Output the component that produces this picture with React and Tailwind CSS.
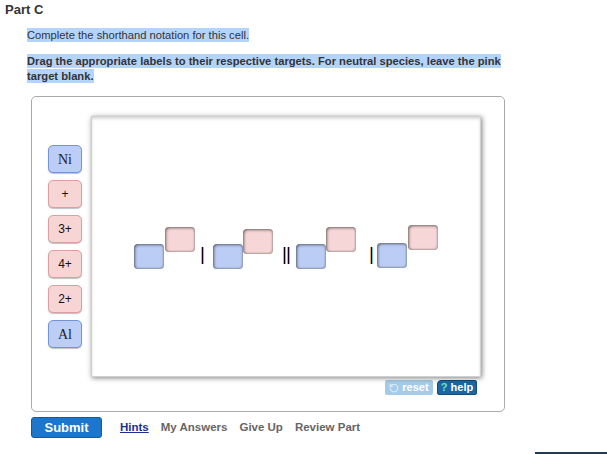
import { RotateCcw } from 'lucide-react';

const labels = [
    { text: 'Ni', kind: 'blue' },
    { text: '+', kind: 'pink' },
    { text: '3+', kind: 'pink' },
    { text: '4+', kind: 'pink' },
    { text: '2+', kind: 'pink' },
    { text: 'Al', kind: 'blue' },
];

// target pairs on the canvas: blue (species) + pink (charge), positions relative to canvas
const pairs = [
    { bx: 42, by: 127, px: 73, py: 110 },
    { bx: 121, by: 127, px: 151, py: 112 },
    { bx: 204, by: 127, px: 234, py: 110 },
    { bx: 285, by: 126, px: 316, py: 108 },
];

const seps = [
    { x: 108, text: '|' },
    { x: 190, text: '||' },
    { x: 277, text: '|' },
];

function Label({ text, kind }) {
    const isBlue = kind === 'blue';
    return (
        <div
            className={`w-[34px] h-[28px] rounded-[5px] border-[1.5px] flex items-center justify-center shadow-[0_1px_1px_rgba(0,0,0,0.25)] ${isBlue
                    ? "bg-[#bccdf6] border-[#7393dc] text-[14px] font-['Liberation_Serif',serif] text-[#222]"
                    : 'bg-[#f8d5d5] border-[#dc9e9e] text-[12px] text-[#111]'
                }`}
        >
            {text}
        </div>
    );
}

function Target({ x, y, kind }) {
    return (
        <div
            style={{ left: x, top: y }}
            className={`absolute w-[30px] h-[25px] rounded-[4px] shadow-[inset_1px_1px_3px_rgba(0,0,0,0.55),inset_-1px_-1px_2px_rgba(0,0,0,0.2)] ${kind === 'blue' ? 'bg-[#bccdf5]' : 'bg-[#f6d6d6]'
                }`}
        />
    );
}

export default function App() {
    return (
        <div className="w-[607px] h-[454px] overflow-hidden bg-white text-[#333] font-['Liberation_Sans',Arial,sans-serif]">
            <div className="pl-[5px] pt-[2px] text-[13px] leading-[15px] font-bold">Part C</div>

            <div className="ml-[27px] w-[478px] text-[11.2px] leading-[15px]">
                <p className="mt-[11px]">
                    <span className="bg-[#b3d4fc] py-[1px]">Complete the shorthand notation for this cell.</span>
                </p>
                <p className="mt-[11px] font-bold">
                    <span className="bg-[#b3d4fc] py-[1px] box-decoration-clone">
                        Drag the appropriate labels to their respective targets. For neutral species, leave the pink target blank.
                    </span>
                </p>
            </div>

            <div className="mt-[12px] ml-[31px] w-[474px] h-[316px] border border-[#aaa] rounded-[5px]">
                <div className="flex pt-[19px] pl-[16px]">
                    <div className="mt-[29px] flex flex-col gap-[7px]">
                        {labels.map((l) => (
                            <Label key={l.text} {...l} />
                        ))}
                    </div>

                    <div className="ml-[9px]">
                        <div className="relative w-[390px] h-[261px] bg-white border border-[#d0d0d0] shadow-[1px_1px_5px_rgba(0,0,0,0.5),inset_0_2px_3px_rgba(0,0,0,0.15)]">
                            {pairs.map((p, i) => (
                                <div key={i}>
                                    <Target x={p.bx} y={p.by} kind="blue" />
                                    <Target x={p.px} y={p.py} kind="pink" />
                                </div>
                            ))}
                            {seps.map((s) => (
                                <span
                                    key={s.x}
                                    style={{ left: s.x }}
                                    className="absolute top-[126px] text-[19px] leading-[22px] text-black tracking-[-1px]"
                                >
                                    {s.text}
                                </span>
                            ))}
                        </div>

                        <div className="flex justify-end gap-[4px] mt-[3px] pr-[4px]">
                            <button className="h-[15px] w-[48px] flex items-center justify-center gap-[3px] bg-[#a6cbe8] rounded-[2px] text-white text-[11px] font-bold leading-none">
                                <RotateCcw size={10} strokeWidth={3} className="text-[#d6ebfa]" />
                                reset
                            </button>
                            <button className="h-[15px] w-[40px] flex items-center justify-center gap-[3px] bg-[#1a67a3] border border-[#114d7c] rounded-tl-[4px] rounded-[2px] text-white text-[11px] font-bold leading-none">
                                <span className="text-[#6fe0c4]">?</span>
                                help
                            </button>
                        </div>
                    </div>
                </div>
            </div>

            <div className="mt-[5px] ml-[31px] flex items-center">
                <button className="w-[71px] h-[21px] bg-[#1b76cc] border border-[#135a9e] rounded-[3px] text-white text-[13px] font-bold leading-none">
                    Submit
                </button>
                <div className="ml-[18px] flex gap-[12px] text-[11.5px] font-bold">
                    <span className="text-[#1a2f96] underline">Hints</span>
                    <span className="text-[#666]">My Answers</span>
                    <span className="text-[#666]">Give Up</span>
                    <span className="text-[#666]">Review Part</span>
                </div>
            </div>

            <div className="mt-[14px] ml-auto w-[72px] h-[2px] bg-[#1c3a5e]" />
        </div>
    );
}
